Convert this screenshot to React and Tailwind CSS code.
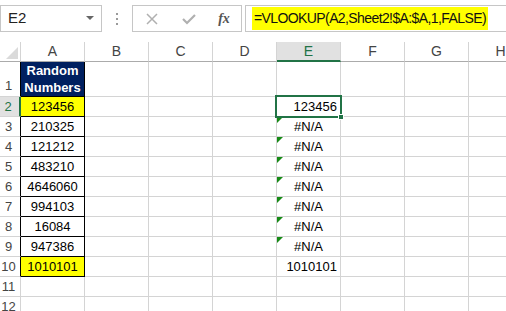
import React from "react";

const cols = ["A", "B", "C", "D", "E", "F", "G", "H"];
const aVals = ["", "123456", "210325", "121212", "483210", "4646060", "994103", "16084", "947386", "1010101"];
const eVals = ["", "123456", "#N/A", "#N/A", "#N/A", "#N/A", "#N/A", "#N/A", "#N/A", "1010101"];

function RowHeader({ n }) {
  const sel = n === 2;
  const border = sel ? "border-r-2 border-r-[#217346]" : n <= 10 ? "border-r border-r-black" : "border-r border-r-[#d4d4d4]";
  return (
    <div
      className={`flex ${n === 1 ? "items-end pb-[1px]" : "items-center"} justify-center pr-[3px] border-b border-b-[#d4d4d4] ${border} ${sel ? "bg-[#e1e1e1] text-[#217346]" : "bg-white text-[#444]"} text-[13px]`}
    >
      {n}
    </div>
  );
}

function Cell({ r, c }) {
  if (c === "A" && r <= 10) {
    if (r === 1) {
      return (
        <div className="bg-[#002060] border-r border-b border-black flex flex-col items-center justify-center text-white font-bold text-[13px] leading-[17px]">
          <span>Random</span>
          <span>Numbers</span>
        </div>
      );
    }
    const yellow = r === 2 || r === 10;
    return (
      <div className={`${yellow ? "bg-[#ffff00]" : "bg-white"} border-r border-b border-black flex items-center justify-center text-[13px] text-black`}>
        {aVals[r - 1]}
      </div>
    );
  }
  if (c === "E" && r >= 2 && r <= 10) {
    const v = eVals[r - 1];
    const err = v === "#N/A";
    return (
      <div className={`relative ${r === 2 ? "z-10" : ""} bg-white border-r border-b border-[#d4d4d4] flex items-center ${err ? "justify-center" : "justify-end pr-[3px]"} text-[13px] text-black`}>
        {err && (
          <svg className="absolute left-0 top-0" width="6" height="6" viewBox="0 0 6 6">
            <polygon points="0,0 6,0 0,6" fill="#168a16" />
          </svg>
        )}
        {v}
        {r === 2 && (
          <>
            <div className="absolute left-[-2px] top-[-2px] right-[-2px] bottom-[-2px] border-2 border-[#217346] pointer-events-none" />
            <div className="absolute right-[-4px] bottom-[-4px] w-[6px] h-[6px] bg-[#217346] border border-white" />
          </>
        )}
      </div>
    );
  }
  return <div className="bg-white border-r border-b border-[#d4d4d4]" />;
}

export default function App() {
  const rows = Array.from({ length: 12 }, (_, i) => i + 1);
  return (
    <div className="w-[506px] h-[311px] overflow-hidden bg-white" style={{ fontFamily: '"Liberation Sans", Arial, sans-serif' }}>
      {/* formula bar */}
      <div className="h-[42px] pt-[5px] flex items-start">
        <div className="w-[102px] h-[27px] border border-[#c6c6c6] flex items-center justify-between pl-[7px] pr-[7px] text-[15px] text-[#222]">
          <span>E2</span>
          <svg width="8" height="5" viewBox="0 0 8 5">
            <polygon points="0,0 8,0 4,4" fill="#666" />
          </svg>
        </div>
        <div className="w-[30px] h-[27px] flex flex-col items-center justify-center gap-[3px]">
          <div className="w-[2px] h-[2px] bg-[#9a9a9a]" />
          <div className="w-[2px] h-[2px] bg-[#9a9a9a]" />
          <div className="w-[2px] h-[2px] bg-[#9a9a9a]" />
        </div>
        <div className="w-[110px] h-[27px] border border-[#c6c6c6] flex items-center">
          <div className="w-[38px] flex justify-center">
            <svg width="12" height="12" viewBox="0 0 12 12">
              <path d="M1 1 L11 11 M11 1 L1 11" stroke="#b0b0b0" strokeWidth="1.5" />
            </svg>
          </div>
          <div className="w-[36px] flex justify-center">
            <svg width="14" height="12" viewBox="0 0 14 12">
              <path d="M1 6 L5 10 L13 2" stroke="#b0b0b0" strokeWidth="2.2" fill="none" />
            </svg>
          </div>
          <div className="w-[34px] flex justify-center">
            <span className="italic font-bold text-[14px] text-[#555]" style={{ fontFamily: '"Liberation Serif", serif' }}>
              fx
            </span>
          </div>
        </div>
        <div className="ml-[3px] flex-1 h-[27px] border border-[#c6c6c6] border-r-0 flex items-center pl-[6px]">
          <span className="bg-[#ffff00] h-[23px] flex items-center px-[2px] text-[14px] text-[#111] tracking-[-0.6px]">
            =VLOOKUP(A2,Sheet2!$A:$A,1,FALSE)
          </span>
        </div>
      </div>
      {/* grid */}
      <div className="grid grid-cols-[21px_repeat(8,64px)] grid-rows-[20px_35px_repeat(11,20px)]">
        <div className="relative bg-white border-r border-b border-[#ababab] border-r-[#d4d4d4]">
          <svg className="absolute right-[2px] bottom-[2px]" width="12" height="12" viewBox="0 0 12 12">
            <polygon points="12,0 12,12 0,12" fill="#dadada" />
          </svg>
        </div>
        {cols.map((c) => (
          <div
            key={c}
            className={`flex items-center justify-center text-[14px] ${c === "E" ? "bg-[#e1e1e1] text-[#217346] border-b-2 border-b-[#217346]" : "bg-white text-[#444] border-b border-b-[#ababab]"} border-r border-r-[#d4d4d4]`}
          >
            {c}
          </div>
        ))}
        {rows.map((r) => (
          <React.Fragment key={r}>
            <RowHeader n={r} />
            {cols.map((c) => (
              <Cell key={c} r={r} c={c} />
            ))}
          </React.Fragment>
        ))}
      </div>
    </div>
  );
}
